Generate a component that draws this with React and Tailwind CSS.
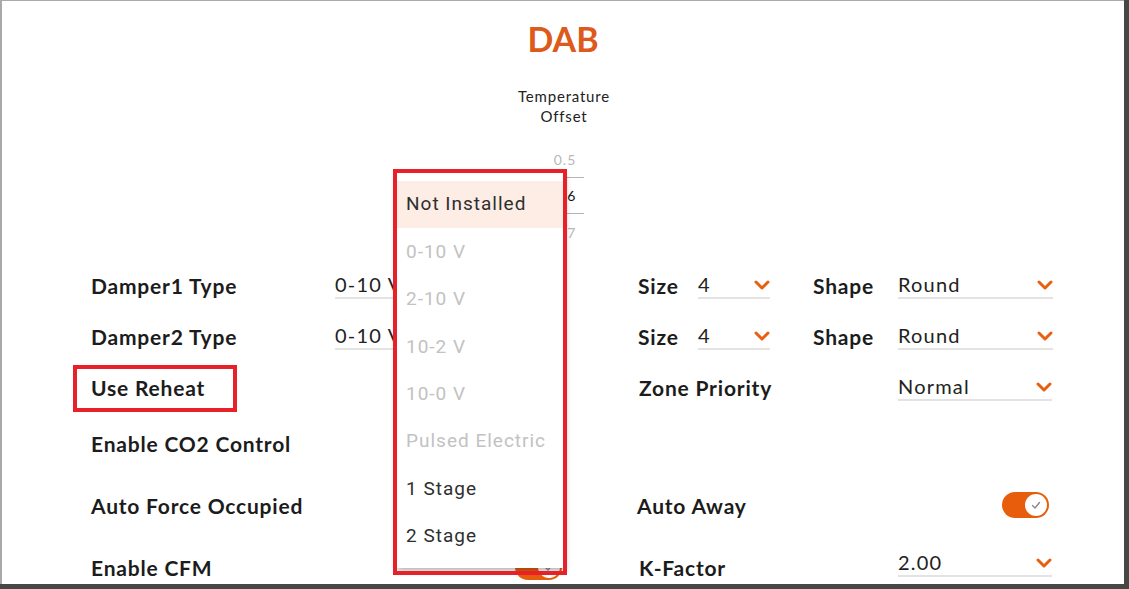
import React from "react";

const font = { fontFamily: "Lato, 'Noto Sans', sans-serif" };
const roboto = { fontFamily: "Roboto, 'Noto Sans', sans-serif" };

const Chevron = () => (
  <svg width="16" height="10" viewBox="0 0 16 10" className="shrink-0">
    <path d="M2 2 L8 8 L14 2" fill="none" stroke="#e8600f" strokeWidth="3" strokeLinecap="round" strokeLinejoin="round" />
  </svg>
);

const Select = ({ value, width, chevron = true }) => (
  <div className={`flex items-center justify-between border-b-2 border-[#e3e3e3] h-[27px] mt-[1px] ${width}`}>
    <span className="text-[20px] tracking-[1.2px] text-[#222] leading-none pb-[1px]">{value}</span>
    {chevron && <Chevron />}
  </div>
);

const Toggle = ({ on = true }) => (
  <div className={`relative w-[47px] h-[26px] rounded-full ${on ? "bg-[#e85d0c]" : "bg-[#cfcfcf]"}`}>
    <div className="absolute right-[2px] top-[2px] w-[22px] h-[22px] rounded-full bg-white flex items-center justify-center">
      <svg width="12" height="12" viewBox="0 0 12 12">
        <path d="M2.5 6.5 L5 9 L9.5 3.5" fill="none" stroke="#8a8a8a" strokeWidth="1.4" strokeLinecap="round" strokeLinejoin="round" />
      </svg>
    </div>
  </div>
);

const Label = ({ children, className = "" }) => (
  <span className={`text-[21px] tracking-[0.8px] font-bold text-[#1c1c1c] leading-none whitespace-nowrap ${className}`}>{children}</span>
);

const options = [
  { t: "Not Installed", on: true, active: true },
  { t: "0-10 V" },
  { t: "2-10 V" },
  { t: "10-2 V" },
  { t: "10-0 V" },
  { t: "Pulsed Electric" },
  { t: "1 Stage", on: true },
  { t: "2 Stage", on: true },
];

export default function App() {
  return (
    <div className="w-[1129px] h-[589px] bg-[#474747] overflow-hidden" style={font}>
      <div className="relative w-[1124px] h-[584px] bg-white border-t border-l-2 border-[#a9a9a9] overflow-hidden">
        {/* header */}
        <div className="mt-[21px] h-[34px] text-center text-[34px] leading-[34px] font-bold text-[#dd5a1b]">DAB</div>
        <div className="mt-[30px] w-[140px] mx-auto pl-[2px] text-center text-[15px] tracking-[0.8px] leading-[20px] text-[#222]">
          Temperature
          <br />
          Offset
        </div>

        {/* number picker */}
        <div className="mt-[16px] w-[38px] mx-auto translate-x-[2px] text-[14px] tracking-[1px] text-center">
          <div className="h-[36px] flex items-center justify-center text-[#b9b9b9] border-b border-[#b5b5b5]">0.5</div>
          <div className="h-[36px] flex items-center justify-center text-[#111] border-b border-[#b5b5b5]">0.6</div>
          <div className="h-[36px] flex items-center justify-center text-[#b9b9b9]">0.7</div>
        </div>

        {/* rows */}
        <div className="mt-[10px] pl-[89px]">
          <div className="flex items-center h-[50px]">
            <div className="flex items-center w-[547px]">
              <Label className="w-[244px]">Damper1 Type</Label>
              <Select value="0-10 V" width="w-[180px]" />
            </div>
            <Label className="w-[60px]">Size</Label>
            <Select value="4" width="w-[72px]" />
            <Label className="ml-[43px] w-[85px]">Shape</Label>
            <Select value="Round" width="w-[155px]" />
          </div>

          <div className="flex items-center h-[52px]">
            <div className="flex items-center w-[547px]">
              <Label className="w-[244px]">Damper2 Type</Label>
              <Select value="0-10 V" width="w-[180px]" />
            </div>
            <Label className="w-[60px]">Size</Label>
            <Select value="4" width="w-[72px]" />
            <Label className="ml-[43px] w-[85px]">Shape</Label>
            <Select value="Round" width="w-[155px]" />
          </div>

          <div className="flex items-center h-[50px]">
            <div className="flex items-center w-[547px]">
              <Label className="w-[424px]">Use Reheat</Label>
              <Toggle on={false} />
            </div>
            <Label className="w-[260px] ml-[1px] -mr-[1px]">Zone Priority</Label>
            <Select value="Normal" width="w-[154px]" />
          </div>

          <div className="flex items-center h-[62px]">
            <div className="flex items-center w-[547px]">
              <Label className="w-[424px]">Enable CO2 Control</Label>
              <Toggle on={false} />
            </div>
          </div>

          <div className="flex items-center h-[62px]">
            <div className="flex items-center w-[546px]">
              <Label className="w-[424px]">Auto Force Occupied</Label>
              <Toggle on={false} />
            </div>
            <Label className="w-[365px]">Auto Away</Label>
            <Toggle />
          </div>

          <div className="flex items-center h-[62px]">
            <div className="flex items-center w-[548px]">
              <Label className="w-[424px]">Enable CFM</Label>
              <Toggle />
            </div>
            <Label className="w-[259px]">K-Factor</Label>
            <div className="-mt-[8px]">
              <Select value="2.00" width="w-[154px]" />
            </div>
          </div>
        </div>

        {/* open dropdown menu */}
        <div
          className="absolute left-[395px] top-[172px] w-[168px] h-[395px] bg-white pt-[8px] shadow-[0_2px_6px_rgba(0,0,0,0.35)]"
          style={roboto}
        >
          {options.map((o) => (
            <div
              key={o.t}
              className={`h-[47.4px] flex items-center pl-[9px] text-[19px] tracking-[1px] whitespace-nowrap ${o.active ? "bg-[#fdede4]" : ""} ${o.on ? "text-[#2e2e2e]" : "text-[#c2c2c2]"}`}
            >
              {o.t}
            </div>
          ))}
        </div>

        {/* annotation boxes */}
        <div className="absolute left-[391px] top-[168px] w-[174px] h-[406px] border-4 border-[#e8202a]" />
        <div className="absolute left-[71px] top-[364px] w-[164px] h-[47px] border-4 border-[#e8202a]" />
      </div>
    </div>
  );
}
